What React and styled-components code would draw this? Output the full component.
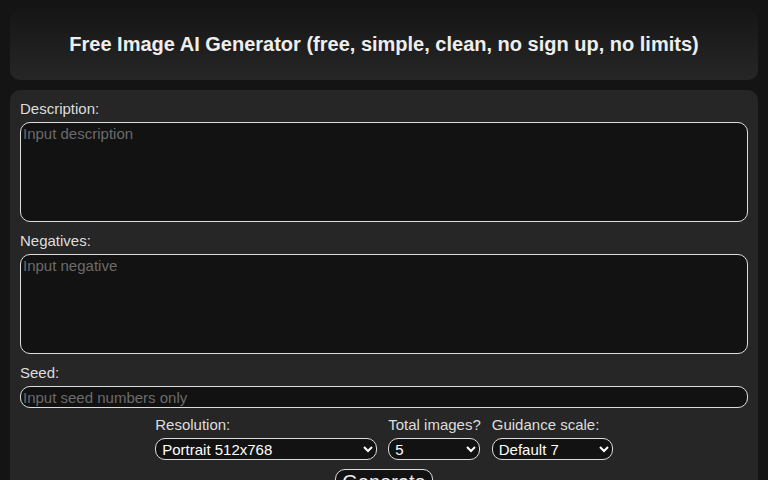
import React from "react";
import styled, { createGlobalStyle } from "styled-components";

const Global = createGlobalStyle`
  html, body {
    margin: 0;
    padding: 0;
    background: #141414;
    color: #dddddd;
    font-family: "Liberation Sans", Arial, sans-serif;
    color-scheme: dark;
  }
  * { box-sizing: border-box; }
`;

const Page = styled.div`
  padding: 8px 10px 10px;
`;

const Header = styled.header`
  height: 72px;
  border-radius: 10px;
  background: linear-gradient(180deg, #151515 0%, #1d1d1d 45%, #262626 100%);
  display: flex;
  align-items: center;
  justify-content: center;
  margin-bottom: 10px;
`;

const Title = styled.h1`
  margin: 0;
  font-size: 20px;
  font-weight: bold;
  color: #eeeeee;
`;

const Card = styled.main`
  background: #262626;
  border-radius: 10px;
  padding: 10px;
  display: flex;
  flex-direction: column;
`;

const Label = styled.label`
  display: block;
  font-size: 15px;
  line-height: 18px;
  color: #dddddd;
  margin-bottom: 4px;
`;

const Area = styled.textarea`
  display: block;
  width: 100%;
  height: 100px;
  margin: 0 0 10px;
  padding: 2px;
  background: #121212;
  color: #eeeeee;
  border: 1px solid #dddddd;
  border-radius: 10px;
  font-family: "Liberation Sans", Arial, sans-serif;
  font-size: 15px;
  line-height: 17px;
  resize: none;
  outline: none;
  &::placeholder { color: #6b6b6b; }
`;

const Input = styled.input`
  display: block;
  width: 100%;
  height: 22px;
  margin: 0 0 8px;
  padding: 1px 2px;
  background: #121212;
  color: #eeeeee;
  border: 1px solid #dddddd;
  border-radius: 10px;
  font-family: "Liberation Sans", Arial, sans-serif;
  font-size: 15px;
  outline: none;
  &::placeholder { color: #6b6b6b; }
`;

const Options = styled.div`
  display: flex;
  justify-content: center;
  gap: 11px;
  margin-bottom: 9px;
`;

const Field = styled.div`
  display: flex;
  flex-direction: column;
`;

const Select = styled.select`
  width: ${(p) => p.$w}px;
  height: 22px;
  background-color: #121212;
  color: #ffffff;
  border: 1px solid #dddddd;
  border-radius: 10px;
  font-family: "Liberation Sans", Arial, sans-serif;
  font-size: 15px;
  padding: 0 2px;
  outline: none;
`;

const ButtonRow = styled.div`
  display: flex;
  justify-content: center;
`;

const Button = styled.button`
  background: #121212;
  color: #eeeeee;
  border: 1px solid #dddddd;
  border-radius: 10px;
  font-family: "Liberation Sans", Arial, sans-serif;
  font-size: 20px;
  padding: 1px 6px;
  cursor: pointer;
`;

export default function App() {
  return (
    <>
      <Global />
      <Page>
        <Header>
          <Title>Free Image AI Generator (free, simple, clean, no sign up, no limits)</Title>
        </Header>
        <Card>
          <Label>Description:</Label>
          <Area placeholder="Input description" />
          <Label>Negatives:</Label>
          <Area placeholder="Input negative" />
          <Label>Seed:</Label>
          <Input placeholder="Input seed numbers only" />
          <Options>
            <Field>
              <Label>Resolution:</Label>
              <Select $w={222} defaultValue="p">
                <option value="p">Portrait 512x768</option>
                <option value="l">Landscape 768x512</option>
                <option value="s">Square 512x512</option>
              </Select>
            </Field>
            <Field>
              <Label>Total images?</Label>
              <Select $w={92} defaultValue="5">
                <option>1</option>
                <option>2</option>
                <option>3</option>
                <option>4</option>
                <option>5</option>
              </Select>
            </Field>
            <Field>
              <Label>Guidance scale:</Label>
              <Select $w={121} defaultValue="7">
                <option value="7">Default 7</option>
                <option value="5">5</option>
                <option value="9">9</option>
              </Select>
            </Field>
          </Options>
          <ButtonRow>
            <Button>Generate</Button>
          </ButtonRow>
        </Card>
      </Page>
    </>
  );
}
